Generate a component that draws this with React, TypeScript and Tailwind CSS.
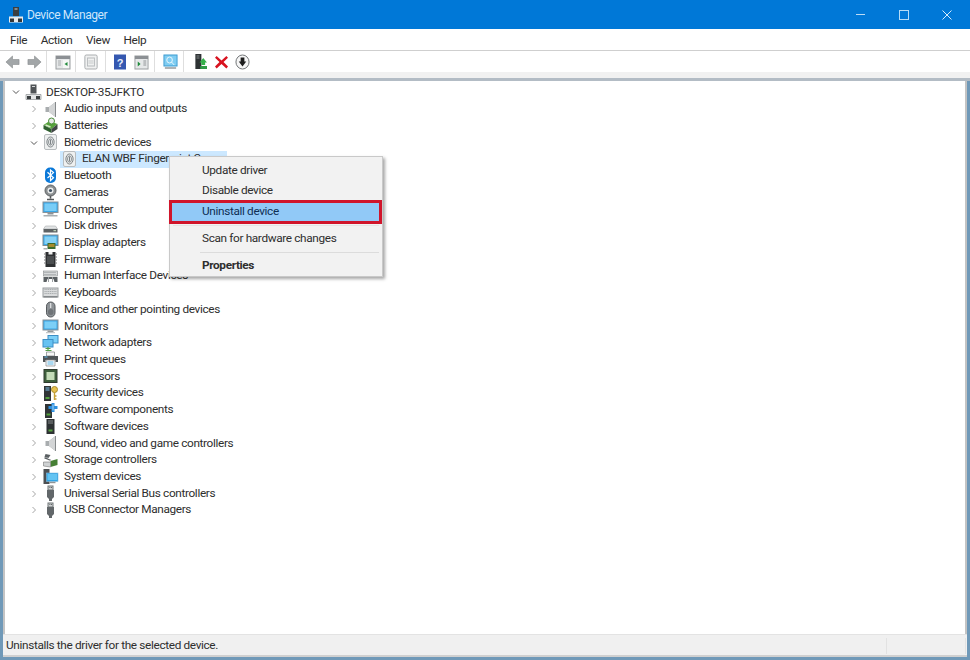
import React from "react";

type IconName =
  | "audio" | "battery" | "bio" | "bt" | "camera" | "computer" | "disk" | "display" | "firmware" | "hid"
  | "keyboard" | "mouse" | "monitor" | "network" | "print" | "cpu" | "security" | "swcomp" | "swdev"
  | "storage" | "system" | "usb" | "desktop";

function Finger() {
  return (
    <g>
      <rect x="2" y="0.5" width="12" height="15" rx="1.5" fill="#eef0f0" stroke="#b9bdbf" />
      <ellipse cx="8" cy="8" rx="3.6" ry="5" fill="none" stroke="#7d8386" strokeWidth="1" />
      <ellipse cx="8" cy="8" rx="2" ry="3.2" fill="none" stroke="#8f9598" strokeWidth="1" />
      <path d="M8 5.5v5" stroke="#7d8386" strokeWidth="1" />
    </g>
  );
}

function Icon({ name }: { name: IconName }) {
  const body = (() => {
    switch (name) {
      case "audio":
        return (<>
          <path d="M3 6h3.5L13 1v15l-6.5-5H3z" fill="#a9adaf" />
          <path d="M6.5 6L13 1v15l-6.5-5z" fill="#d3d5d6" />
          <path d="M13 1v15" stroke="#85898b" />
        </>);
      case "battery":
        return (<>
          <path d="M1 8l6-4 8 3-6 5z" fill="#57a23c" />
          <path d="M1 8v4l8 4v-4z" fill="#2f5f2f" />
          <path d="M9 12v4l6-4V7z" fill="#404545" />
          <circle cx="9" cy="4" r="3" fill="#e8eaea" stroke="#4a8f3a" />
          <path d="M3 8l5 2" stroke="#d6eac9" strokeWidth="1.4" />
        </>);
      case "bio":
        return <Finger />;
      case "bt":
        return (<>
          <rect x="2.5" y="0.5" width="11" height="15.5" rx="5" fill="#0a78d8" />
          <path d="M5 5.2l6 5.5-3 2.8V3l3 2.6-6 5.4" fill="none" stroke="#fff" strokeWidth="1.2" />
        </>);
      case "camera":
        return (<>
          <circle cx="8" cy="6.5" r="5.5" fill="#8d9193" stroke="#5c6062" />
          <circle cx="8" cy="6.5" r="3" fill="#eef0f0" />
          <circle cx="8" cy="6.5" r="1.6" fill="#3f5060" />
          <path d="M8 12v2.5M4.5 15.5h7" stroke="#55595b" strokeWidth="1.6" />
        </>);
      case "computer":
        return (<>
          <rect x="0.5" y="1" width="15" height="10.5" fill="#39a7e8" stroke="#8a9298" />
          <rect x="2" y="2.5" width="12" height="7.5" fill="#79cdf7" />
          <path d="M5 12h6v1.5H5z" fill="#8b9195" />
          <path d="M1 14h14v1.5H1z" fill="#a9aeb1" />
        </>);
      case "disk":
        return (<>
          <path d="M3 8h10l2 3H1z" fill="#e2e4e5" stroke="#a7abad" strokeWidth="0.6" />
          <rect x="1" y="11" width="14" height="3.5" fill="#5e6365" />
          <path d="M11 12.7h2.5" stroke="#cfe9c8" />
        </>);
      case "display":
        return (<>
          <rect x="0.5" y="1" width="15" height="10.5" fill="#39a7e8" stroke="#7f8a90" />
          <rect x="2" y="2.5" width="12" height="7.5" fill="#86d2f6" />
          <path d="M5 9h8v6H5z" fill="#3b6b2e" />
          <path d="M6 10h6v3H6z" fill="#a68b2e" />
          <path d="M1 14h4v1.5H1z" fill="#a9aeb1" />
        </>);
      case "firmware":
        return (<>
          <rect x="3" y="1" width="10" height="15" fill="#2f3133" />
          <path d="M1.5 3h1.5M1.5 6h1.5M1.5 9h1.5M1.5 12h1.5M13 3h1.5M13 6h1.5M13 9h1.5M13 12h1.5" stroke="#777" />
          <path d="M6 1h4v2.5H6z" fill="#f0f0f0" />
          <path d="M4.5 5h7v8h-7z" fill="#4b4e50" />
        </>);
      case "hid":
        return (<>
          <rect x="1" y="3" width="14" height="5" fill="#d8dadb" stroke="#85898b" strokeWidth="0.6" />
          <path d="M2 4.5h12M2 6.5h12" stroke="#8f9395" strokeDasharray="1 1" />
          <path d="M1 9h14v5h-3l-1-3H5l-1 3H1z" fill="#5b6063" />
          <path d="M6 9v5M10 9v5" stroke="#9da1a3" />
        </>);
      case "keyboard":
        return (<>
          <rect x="0.5" y="4" width="15" height="9" fill="#d9dbdc" stroke="#9a9ea0" />
          <path d="M2 5.5h12M2 7.5h12M2 9.5h12" stroke="#a8acae" strokeDasharray="1.2 0.6" />
          <path d="M1 12h14v1.5H1z" fill="#85898b" />
        </>);
      case "mouse":
        return (<>
          <rect x="4" y="1" width="8.5" height="15" rx="4.2" fill="#8d9296" stroke="#55595c" />
          <path d="M8.2 2v5" stroke="#e4e6e7" strokeWidth="1.2" />
          <rect x="5.5" y="8" width="5.5" height="6" rx="2.5" fill="#6f7478" />
        </>);
      case "monitor":
        return (<>
          <rect x="0.5" y="2" width="15" height="10" fill="#3aa6e6" stroke="#8a9298" />
          <rect x="2" y="3.5" width="12" height="7" fill="#7ccff7" />
          <path d="M5 12.5h6V14H5z" fill="#94999c" />
          <path d="M3.5 14.2h9v1h-9z" fill="#b4b8ba" />
        </>);
      case "network":
        return (<>
          <rect x="5.5" y="0.5" width="10" height="7.5" fill="#7ccff7" stroke="#3c8ec5" />
          <rect x="0.5" y="4.5" width="10" height="7.5" fill="#66c2f2" stroke="#3c8ec5" />
          <path d="M3 13.5h5M5.5 12v3M3 15.5h6" stroke="#55a04a" strokeWidth="1.2" />
        </>);
      case "print":
        return (<>
          <path d="M4 1h8v4H4z" fill="#f6f7f7" stroke="#7b8082" strokeWidth="0.7" />
          <path d="M0.5 5h15v6h-2.5v-2H3v2H0.5z" fill="#4f5558" />
          <path d="M3.5 9h9v6h-9z" fill="#f8f8f8" stroke="#84888a" strokeWidth="0.7" />
          <path d="M2 6h3" stroke="#5cb8e8" />
          <path d="M5 11h6M5 13h6" stroke="#5cb8e8" />
        </>);
      case "cpu":
        return (<>
          <rect x="1.5" y="1.5" width="13" height="13" fill="#3e5f3c" stroke="#2f3a2e" />
          <rect x="4" y="4" width="8" height="8" fill="#c4dcb8" />
        </>);
      case "security":
        return (<>
          <rect x="1.5" y="1" width="7" height="15" fill="#313537" />
          <path d="M3 3h4M3 5h4" stroke="#7ec0ea" />
          <rect x="3" y="12" width="4" height="2" fill="#56a23f" />
          <circle cx="12" cy="4.5" r="3" fill="#e7c24f" stroke="#a98a2b" />
          <path d="M12 7v8M12 11h2M12 14h2" stroke="#c6a036" strokeWidth="1.4" />
        </>);
      case "swcomp":
        return (<>
          <rect x="2.5" y="2" width="7" height="14" fill="#313537" />
          <rect x="4" y="11.5" width="4" height="2" fill="#56a23f" />
          <path d="M9 1h3v3h3v3h-3v3H9V7H6V4h3z" fill="#2c8fe0" />
          <path d="M10 2.5h1v6h-1z" fill="#a6d8f7" />
        </>);
      case "swdev":
        return (<>
          <rect x="4" y="1" width="8" height="15" fill="#2d3133" />
          <path d="M5.5 3h5M5.5 5h5" stroke="#85898b" />
          <rect x="6" y="11.5" width="4" height="2" fill="#56a23f" />
        </>);
      case "storage":
        return (<>
          <path d="M3 2l5 1-2 3-4-1z" fill="#5b6063" />
          <path d="M2 6c3 0 3 2 6 2" stroke="#5b6063" fill="none" strokeWidth="1.5" />
          <path d="M8 9l7-2v6l-7 2z" fill="#467f34" />
          <path d="M1 10l7 0v5l-7-1z" fill="#cfd2d3" stroke="#777" strokeWidth="0.6" />
        </>);
      case "system":
        return (<>
          <rect x="1" y="1" width="6" height="15" fill="#4c5053" />
          <rect x="4" y="5" width="11.5" height="8.5" fill="#2fa4e6" stroke="#89bcdd" strokeWidth="0.6" />
          <rect x="5" y="6" width="9.5" height="6" fill="#63c4f3" />
          <path d="M7 14.5h6" stroke="#8f9395" strokeWidth="1.4" />
        </>);
      case "usb":
        return (<>
          <rect x="5.5" y="1" width="5" height="4" fill="#cfd2d3" stroke="#6f7477" />
          <path d="M4.5 5h7v7l-2 2v2h-3v-2l-2-2z" fill="#62676a" />
          <path d="M7 2.5h.8M8.6 2.5h.8" stroke="#44484a" />
        </>);
      case "desktop":
        return (<>
          <rect x="5" y="0.5" width="6" height="9" fill="#505457" />
          <rect x="6.5" y="2" width="3" height="1" fill="#d5d7d8" />
          <path d="M0.5 10.5h15v5h-15z" fill="#e3e5e6" stroke="#8b8f91" strokeWidth="0.7" />
          <rect x="1.5" y="12" width="4" height="3.2" fill="#3a3e40" />
          <rect x="10.5" y="12" width="4" height="3.2" fill="#3a3e40" />
        </>);
    }
  })();
  return (
    <svg width="17" height="17" viewBox="0 0 16 17" className="shrink-0">
      {body}
    </svg>
  );
}

const rows: { label: string; icon: IconName }[] = [
  { label: "Audio inputs and outputs", icon: "audio" },
  { label: "Batteries", icon: "battery" },
  { label: "Biometric devices", icon: "bio" },
  { label: "ELAN WBF Fingerprint Sensor", icon: "bio" },
  { label: "Bluetooth", icon: "bt" },
  { label: "Cameras", icon: "camera" },
  { label: "Computer", icon: "computer" },
  { label: "Disk drives", icon: "disk" },
  { label: "Display adapters", icon: "display" },
  { label: "Firmware", icon: "firmware" },
  { label: "Human Interface Devices", icon: "hid" },
  { label: "Keyboards", icon: "keyboard" },
  { label: "Mice and other pointing devices", icon: "mouse" },
  { label: "Monitors", icon: "monitor" },
  { label: "Network adapters", icon: "network" },
  { label: "Print queues", icon: "print" },
  { label: "Processors", icon: "cpu" },
  { label: "Security devices", icon: "security" },
  { label: "Software components", icon: "swcomp" },
  { label: "Software devices", icon: "swdev" },
  { label: "Sound, video and game controllers", icon: "audio" },
  { label: "Storage controllers", icon: "storage" },
  { label: "System devices", icon: "system" },
  { label: "Universal Serial Bus controllers", icon: "usb" },
  { label: "USB Connector Managers", icon: "usb" },
];

function Chevron({ open }: { open?: boolean }) {
  return (
    <svg width="8" height="8" viewBox="0 0 8 8" className="shrink-0">
      <path d={open ? "M1 2.5l3 3 3-3" : "M2.5 1l3 3-3 3"} fill="none" stroke={open ? "#555" : "#a6a6a6"} strokeWidth="1" />
    </svg>
  );
}

function Row({ label, icon }: { label: string; icon: IconName }) {
  if (label.startsWith("ELAN")) {
    return (
      <div className="flex h-[16.72px] items-center pl-[54px]">
        <div className="flex h-[16.72px] w-[167px] items-center overflow-hidden bg-[#cce8ff] pl-[1px] whitespace-nowrap">
          <Icon name={icon} />
          <span className="ml-[4px]">{label}</span>
        </div>
      </div>
    );
  }
  return (
    <div className="flex h-[16.72px] items-center pl-[24px] whitespace-nowrap">
      <Chevron open={label === "Biometric devices"} />
      <div className="ml-[2px] flex w-[21px] justify-center">
        <Icon name={icon} />
      </div>
      <span className="ml-[3px]">{label}</span>
    </div>
  );
}

function Sep({ ml }: { ml: string }) {
  return <div className={`h-[21px] w-px bg-[#dedede] ${ml}`} />;
}

function ToolIcon({ children, w, ml }: { children: React.ReactNode; w: number; ml: string }) {
  return (
    <svg width={w} height="18" viewBox="0 0 16 18" preserveAspectRatio="none" className={`shrink-0 ${ml}`}>
      {children}
    </svg>
  );
}

const paneIcon = (
  <>
    <rect x="1" y="3" width="14" height="13" fill="#e6e8e9" stroke="#9a9ea0" />
    <rect x="1" y="3" width="14" height="3" fill="#8c9094" />
  </>
);

function MenuItem({ children, bold }: { children: React.ReactNode; bold?: boolean }) {
  return <div className={`flex h-[20.5px] items-center pl-[32px] ${bold ? "font-bold" : ""}`}>{children}</div>;
}

export default function App() {
  return (
    <div
      className="flex h-[660px] w-[970px] flex-col overflow-hidden bg-[#f0f0f0] text-[11.8px] tracking-[-0.35px] text-[#2e2e2e]"
      style={{ fontFamily: 'Roboto, "Noto Sans", sans-serif' }}
    >
      {/* title bar */}
      <div className="flex h-[29px] shrink-0 items-center bg-[#0078d7] text-white">
        <div className="ml-[8px]">
          <svg width="16" height="18" viewBox="0 0 16 18">
            <rect x="5" y="1" width="6" height="9" fill="#3b3f42" />
            <rect x="6.5" y="2.5" width="3" height="1" fill="#d5d7d8" />
            <path d="M1 10.5h14v6H1z" fill="#e8eaeb" />
            <rect x="2" y="12.5" width="4" height="3.5" fill="#33373a" />
            <rect x="10" y="12.5" width="4" height="3.5" fill="#33373a" />
          </svg>
        </div>
        <span className="ml-[3px] pt-[1px] text-[12px] tracking-[-0.4px] text-[#cfe6fa]">Device Manager</span>
        <div className="ml-auto flex items-center pr-[1px]">
          <div className="flex w-[43.5px] justify-center">
            <div className="h-px w-[9px] bg-[#bcdcf5]" />
          </div>
          <div className="flex w-[43.5px] justify-center">
            <div className="h-[10px] w-[10px] border border-[#b5dcf7]" />
          </div>
          <div className="flex w-[43.5px] justify-center">
            <svg width="10" height="10" viewBox="0 0 10 10">
              <path d="M.5.5l9 9M9.5.5l-9 9" stroke="#d6ebfb" strokeWidth="1" />
            </svg>
          </div>
        </div>
      </div>

      {/* menu */}
      <div className="flex h-[21px] shrink-0 items-center gap-[13.5px] bg-white pl-[10px] pt-[2px]">
        <span>File</span>
        <span>Action</span>
        <span>View</span>
        <span>Help</span>
      </div>
      <div className="h-px shrink-0 bg-[#cfcfcf]" />

      {/* toolbar */}
      <div className="flex h-[21px] shrink-0 items-center bg-white pl-[5px]">
        <ToolIcon w={15} ml="">
          <path d="M1 9l7-6v3.5h7v5H8V15z" fill="#a2a6a8" stroke="#85898b" strokeWidth="0.6" />
        </ToolIcon>
        <ToolIcon w={15} ml="ml-[7px]">
          <path d="M15 9L8 3v3.5H1v5h7V15z" fill="#a2a6a8" stroke="#85898b" strokeWidth="0.6" />
        </ToolIcon>
        <Sep ml="ml-[4px]" />
        <ToolIcon w={16} ml="ml-[8px]">
          {paneIcon}
          <rect x="8" y="7" width="6" height="8" fill="#f5f7f5" />
          <path d="M12.5 9l-3 2 3 2z" fill="#1f8a3b" />
          <path d="M3 8h3M3 10h3M3 12h3" stroke="#a8acae" />
        </ToolIcon>
        <Sep ml="ml-[4px]" />
        <ToolIcon w={14} ml="ml-[8px]">
          <rect x="1" y="2" width="14" height="14" rx="1.5" fill="#f0f1f1" stroke="#a5a9ab" />
          <rect x="4" y="5" width="8" height="8" fill="none" stroke="#b5b9bb" />
          <path d="M5 8h6M5 10h6" stroke="#c4c7c9" />
        </ToolIcon>
        <Sep ml="ml-[7px]" />
        <svg width="12" height="18" viewBox="0 0 12 18" className="ml-[8px] shrink-0">
          <rect x="0" y="1.5" width="12" height="15" fill="#3558b0" />
          <text x="6" y="13.5" textAnchor="middle" fontSize="11" fontWeight="700" fill="#e8eefa" fontFamily="Liberation Sans">?</text>
        </svg>
        <ToolIcon w={15} ml="ml-[8px]">
          {paneIcon}
          <path d="M4 8.5l3 2.5-3 2.5z" fill="#1f8a3b" />
          <path d="M10 8h3M10 10h3M10 12h3" stroke="#8f9395" />
        </ToolIcon>
        <Sep ml="ml-[5px]" />
        <ToolIcon w={15} ml="ml-[8px]">
          <rect x="1" y="2" width="14" height="11" fill="#7fcdf2" stroke="#3d9bd0" />
          <circle cx="7" cy="7" r="3" fill="none" stroke="#eaf7fd" />
          <path d="M9 9l3 3" stroke="#eaf7fd" />
          <path d="M2 15h12" stroke="#8f9395" strokeWidth="1.4" />
        </ToolIcon>
        <Sep ml="ml-[5px]" />
        <ToolIcon w={12} ml="ml-[11px]">
          <rect x="0.5" y="1" width="8" height="15" fill="#2e3234" />
          <path d="M2 3h4M2 5h4" stroke="#8f9395" />
          <path d="M11 5l5 4.5h-2.5V12h-5V9.5H6z" fill="#35b04a" />
          <path d="M7 13h9v3H7z" fill="#2f9a45" />
        </ToolIcon>
        <ToolIcon w={13} ml="ml-[8px]">
          <path d="M2 3l6 4.5L14 3l2 1.8L10.5 9 16 13.5 14 15.5 8 11l-6 4.5L0 13.5 5.5 9 0 4.8z" fill="#d8121f" />
        </ToolIcon>
        <ToolIcon w={15} ml="ml-[7px]">
          <circle cx="8" cy="9" r="7" fill="#f6f6f6" stroke="#6e7274" />
          <path d="M6 4.5h4v4h2l-4 5-4-5h2z" fill="#1d1d1d" />
        </ToolIcon>
      </div>
      <div className="h-[6px] shrink-0 bg-[#f1f1f1]" />
      <div className="h-[3px] shrink-0 bg-[#b3bcc5]" />

      {/* framed body */}
      <div className="flex min-h-0 flex-1 flex-col border-x-[3px] border-b-[3px] border-x-[#7099b8] border-b-[#7099b8] bg-[#f0f0f0]">
        <div className="relative min-h-0 flex-1 border-x-2 border-x-[#c4c4c4] bg-white pt-[3px]">
          <div className="ml-[1px] flex h-[16.72px] items-center pl-[6px] whitespace-nowrap">
            <Chevron open />
            <div className="ml-[3px] flex w-[21px] justify-center">
              <Icon name="desktop" />
            </div>
            <span className="ml-[2px]">DESKTOP-35JFKTO</span>
          </div>
          {rows.map((r) => (
            <div key={r.label} className="ml-[1px]">
              <Row label={r.label} icon={r.icon} />
            </div>
          ))}

          {/* context menu */}
          <div className="absolute left-[164px] top-[75px] h-[121px] w-[214px] border border-[#c9c9c9] bg-[#f2f2f2] pt-[3.5px] shadow-[2px_2px_3px_rgba(0,0,0,0.35)]">
            <MenuItem>Update driver</MenuItem>
            <MenuItem>Disable device</MenuItem>
            <div className="-my-[1.75px] -ml-[1px] flex h-[24px] w-[213px] items-center border-[3px] border-[#d0152b] bg-[#91c9f7] pl-[30px] text-[#0f2f55]">
              Uninstall device
            </div>
            <div className="mx-[3px] my-[2.75px] h-px bg-[#e4e4e4]" />
            <MenuItem>Scan for hardware changes</MenuItem>
            <div className="ml-[30px] mr-[3px] my-[2.75px] h-px bg-[#dcdcdc]" />
            <MenuItem bold>Properties</MenuItem>
          </div>
        </div>

        {/* status bar */}
        <div className="flex h-[23px] shrink-0 border-t border-b-2 border-t-[#e3e3e3] border-b-[#d0d0d0] bg-[#f0f0f0] pt-[2px]">
          <div className="flex flex-1 items-center pl-[3px]">Uninstalls the driver for the selected device.</div>
          <div className="my-[1px] w-[80px] border-x border-x-[#e2e2e2]" />
          <div className="w-[1px]" />
        </div>
      </div>
    </div>
  );
}
